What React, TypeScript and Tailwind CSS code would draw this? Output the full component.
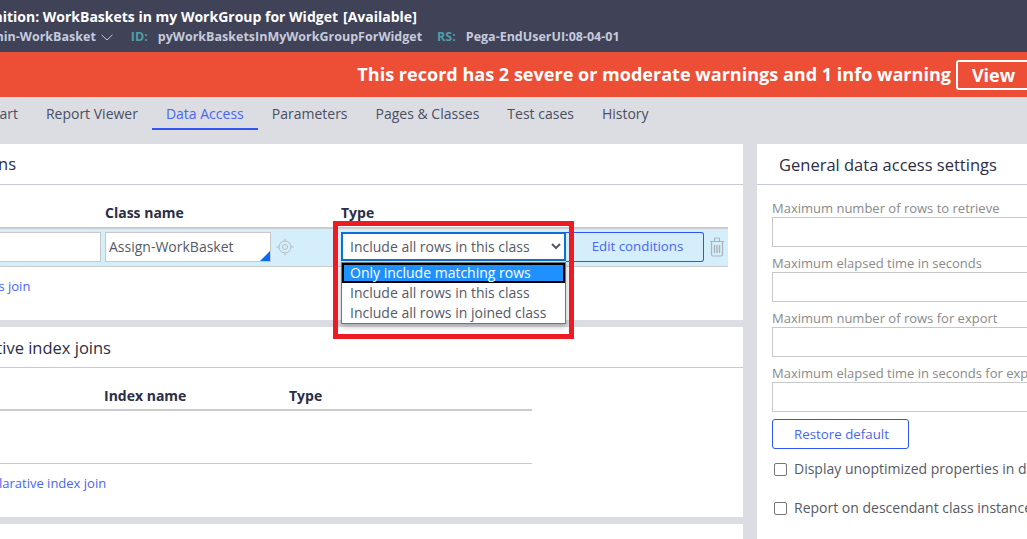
const FONT = "font-['Open_Sans',sans-serif]";

const TargetIcon = (): React.JSX.Element => (
  <svg width="18" height="18" viewBox="0 0 18 18" fill="none" stroke="#b4bcc4" strokeWidth="1">
    <circle cx="9" cy="9" r="6" />
    <circle cx="9" cy="9" r="2.5" />
    <path d="M9 0.5v2.5M9 15v2.5M0.5 9h2.5M15 9h2.5" />
  </svg>
);

const TrashIcon = (): React.JSX.Element => (
  <svg width="16" height="20" viewBox="0 0 16 20" fill="none" stroke="#a9b3b8" strokeWidth="1.2">
    <path d="M1 4.5h14M5.5 4.5V2a1 1 0 0 1 1-1h3a1 1 0 0 1 1 1v2.5" />
    <path d="M2.5 4.5v13a1.5 1.5 0 0 0 1.5 1.5h8a1.5 1.5 0 0 0 1.5-1.5v-13" />
    <path d="M5.5 8v8M8 8v8M10.5 8v8" strokeWidth="1.4" />
  </svg>
);

const HeaderChevron = (): React.JSX.Element => (
  <svg width="12" height="7" viewBox="0 0 12 7" fill="none" stroke="#c5cbdc" strokeWidth="1">
    <path d="M0.5 0.8 6 6l5.5-5.2" />
  </svg>
);

const SettingField = ({ label }: { label: string }): React.JSX.Element => (
  <div className="flex flex-col">
    <span className="h-[18px] whitespace-nowrap text-[13px] leading-[18px] text-[#8a8a8a]">{label}</span>
    <div className="h-[30px] w-[300px] border border-[#c8c8c8] bg-white" />
  </div>
);

const SettingCheck = ({ label }: { label: string }): React.JSX.Element => (
  <div className="flex items-center gap-[7px] pl-[2px]">
    <div className="h-[13px] w-[13px] shrink-0 rounded-[2px] border border-[#767676] bg-white" />
    <span className="whitespace-nowrap text-sm leading-5 text-[#555a66]">{label}</span>
  </div>
);

const tabs = ['Report Viewer', 'Data Access', 'Parameters', 'Pages & Classes', 'Test cases', 'History'];

const App = (): React.JSX.Element => (
  <div className={`relative h-[539px] w-[1027px] overflow-hidden bg-[#dcdde3] ${FONT}`}>
    <header className="flex h-[52px] flex-col bg-[#404258] pt-[7px]">
      <div className="-ml-[86px] flex items-center gap-[5px] whitespace-nowrap leading-[19px]">
        <span className="text-sm font-bold text-white">Report Definition: WorkBaskets in my WorkGroup for Widget</span>
        <span className="text-sm font-bold text-white">[Available]</span>
      </div>
      <div className="-ml-[25px] mt-[1px] flex items-center whitespace-nowrap text-[12.5px] font-bold leading-[18px] text-[#c5cbdc]">
        <span>Admin-WorkBasket</span>
        <span className="ml-[5px]"><HeaderChevron /></span>
        <span className="ml-[18px] text-[#4f9fa6]">ID:</span>
        <span className="ml-[10px]">pyWorkBasketsInMyWorkGroupForWidget</span>
        <span className="ml-[15px] text-[#4f9fa6]">RS:</span>
        <span className="ml-[10px]">Pega-EndUserUI:08-04-01</span>
      </div>
    </header>

    <div className="flex h-[45px] items-center justify-end gap-[5px] bg-[#ec4e36] pr-0">
      <span className="whitespace-nowrap pt-[1px] text-[18.06px] font-bold text-white">This record has 2 severe or moderate warnings and 1 info warning</span>
      <div className="-mr-[4px] flex h-[30px] w-[75px] items-center justify-center rounded-[3px] border-2 border-white text-lg font-bold text-white">
        View
      </div>
    </div>

    <nav className="-ml-[18px] flex h-[33px] items-stretch text-sm text-[#4b4e60]">
      <div className="flex items-center pr-[14px]">Chart</div>
      {tabs.map((tab) => (
        <div
          key={tab}
          className={
            tab === 'Data Access'
              ? 'flex items-center border-b-2 border-[#2f55f5] px-[14px] pt-[2px] text-[#4a66f0]'
              : 'flex items-center border-b-2 border-transparent px-[14px] pt-[2px]'
          }
        >
          {tab}
        </div>
      ))}
    </nav>

    <main className="mt-[14px] flex gap-[14px]">
      <div className="flex w-[743px] shrink-0 flex-col gap-[7px]">
        <section className="h-[176px] bg-white">
          <h2 className="flex h-[41px] items-center justify-end border-b border-[#c9cad6] pr-[727px] text-[16.5px] leading-none whitespace-nowrap text-[#2b2e45]">
            Class joins
          </h2>
          <div className="flex h-[42px] items-end pb-[4px] text-sm font-bold text-[#2b2e45]">
            <span className="ml-[105px] w-[236px]">Class name</span>
            <span>Type</span>
          </div>
          <div className="mr-[15px] flex h-[40px] items-start border-t-2 border-b border-[#cbcbcb] bg-[#d5eefb] pt-[3px]">
            <div className="h-[30px] w-[101px] border border-l-0 border-[#c8c8c8] bg-white" />
            <div className="relative ml-[4px] flex h-[30px] w-[166px] items-center border border-[#c8c8c8] bg-white pb-[1px] pl-[3px] text-sm text-[#555a66]">
              Assign-WorkBasket
              <div className="absolute right-0 bottom-0 h-0 w-0 border-b-[10px] border-l-[10px] border-b-[#0a6cf0] border-l-transparent" />
            </div>
            <div className="mt-[6px] ml-[5px] w-[18px]"><TargetIcon /></div>
            <div className="relative ml-[47px] w-[225px]">
              <select
                defaultValue="all"
                className="h-[29px] w-[225px] rounded-none border-2 border-[#0f6fd2] bg-white pl-[3px] text-sm text-[#555a66]"
              >
                <option value="match">Only include matching rows</option>
                <option value="all">Include all rows in this class</option>
                <option value="joined">Include all rows in joined class</option>
              </select>
              {/* open list sits over the row and the panel below */}
              <div className="absolute top-[30px] left-0 z-10 w-[225px] border border-[#767676] bg-white text-sm leading-[20px] text-[#555a66] shadow-[0_2px_6px_rgba(0,0,0,0.3)]">
                <div className="border-2 border-black bg-[#1e90ff] pl-[6px] leading-[16px] text-white">Only include matching rows</div>
                <div className="pl-[8px]">Include all rows in this class</div>
                <div className="pl-[8px]">Include all rows in joined class</div>
              </div>
              <div className="pointer-events-none absolute -top-[11px] -left-[8px] z-20 h-[118px] w-[241px] border-[5px] border-[#ed1c24]" />
            </div>
            <button className="h-[30px] w-[138px] rounded-r-[3px] border border-l-0 border-[#2f55f5] pl-[6px] text-[13.3px] text-[#4a66f0]">
              Edit conditions
            </button>
            <div className="mt-[5px] ml-[5px]"><TrashIcon /></div>
          </div>
          <div className="-ml-[52px] mt-[10px] text-[13px] leading-[18px] whitespace-nowrap text-[#4a66f0]">Add class join</div>
        </section>

        <section className="h-[190px] bg-white">
          <h2 className="flex h-[41px] items-center justify-end border-b border-[#c9cad6] pt-[2px] pr-[632px] text-[16.5px] leading-none whitespace-nowrap text-[#2b2e45]">
            Associative index joins
          </h2>
          <div className="mr-[211px] flex h-[43px] items-end border-b-2 border-[#cbcbcb] pb-[3px] text-sm font-bold text-[#2b2e45]">
            <span className="ml-[104px] w-[185px]">Index name</span>
            <span>Type</span>
          </div>
          <div className="mr-[211px] h-[53px] border-b border-[#cbcbcb]" />
          <div className="-ml-[50px] mt-[10px] text-[13px] leading-[18px] whitespace-nowrap text-[#4a66f0]">Add declarative index join</div>
        </section>

        <section className="h-[20px] bg-white" />
      </div>

      <aside className="h-[400px] flex-1 bg-white">
        <h2 className="flex h-[41px] items-center whitespace-nowrap border-b border-[#c9cad6] pt-[2px] pl-[22px] text-[16.5px] leading-none text-[#2b2e45]">
          General data access settings
        </h2>
        <div className="flex flex-col gap-[7px] pt-[14px] pl-[15px]">
          <SettingField label="Maximum number of rows to retrieve" />
          <SettingField label="Maximum elapsed time in seconds" />
          <SettingField label="Maximum number of rows for export" />
          <SettingField label="Maximum elapsed time in seconds for export" />
        </div>
        <button className="mt-[7px] ml-[15px] h-[30px] w-[137px] rounded-[3px] border border-[#2f55f5] pt-[2px] pl-[2px] text-[13.3px] text-[#4a66f0]">
          Restore default
        </button>
        <div className="mt-[10px] ml-[15px] flex flex-col gap-[19px]">
          <SettingCheck label="Display unoptimized properties in data explorer" />
          <SettingCheck label="Report on descendant class instances" />
        </div>
      </aside>
    </main>
  </div>
);

export default App;
